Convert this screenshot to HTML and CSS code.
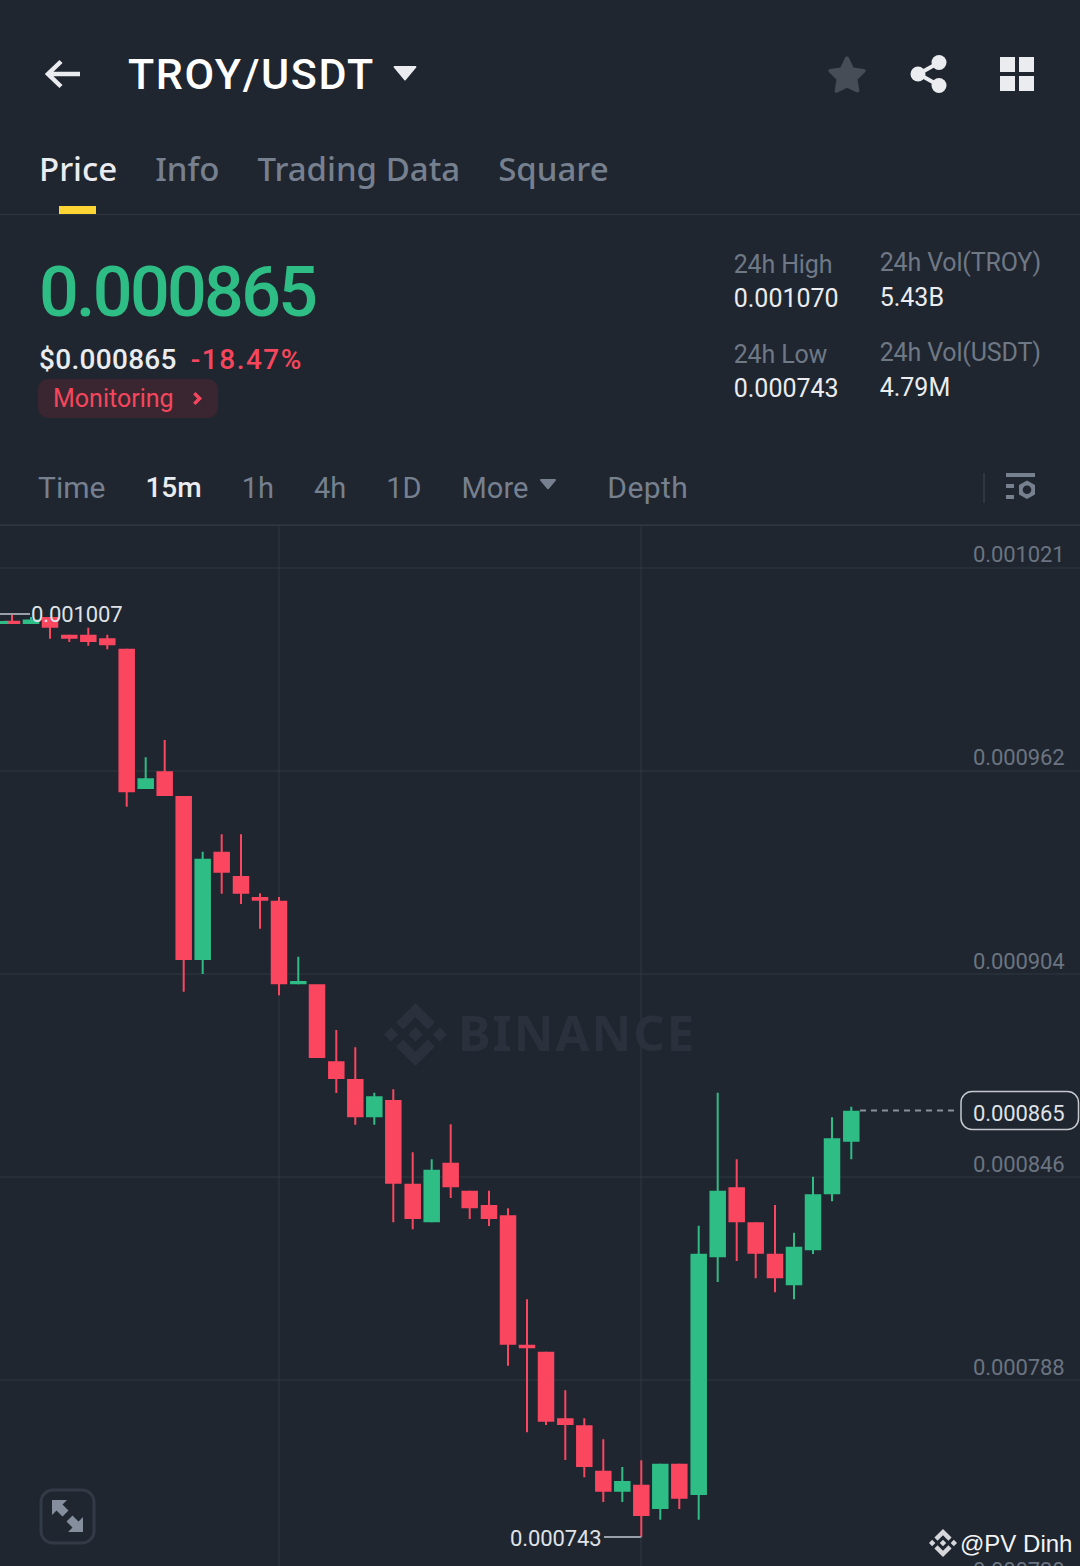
FILE: index.html
```html
<!DOCTYPE html>
<html lang="en">
<head>
<meta charset="utf-8">
<title>TROY/USDT</title>
<link rel="stylesheet" href="styles.css">
</head>
<body>
<svg class="defs" width="0" height="0" aria-hidden="true">
  <symbol id="bnb" viewBox="0 0 126.61 126.61">
    <path d="M38.73 53.2 63.3 28.63l24.6 24.6 14.3-14.3L63.3 0 24.43 38.9zM0 63.31 14.3 49l14.3 14.31-14.3 14.3zM38.73 73.41 63.31 97.98 87.9 73.4l14.31 14.3-38.9 38.91-38.88-38.88zM97.98 63.31 112.28 49l14.33 14.31-14.31 14.3zM77.83 63.3 63.3 48.78 48.78 63.3l14.52 14.52z"/>
  </symbol>
</svg>
<main class="page">
  <header class="topbar">
    <svg class="icon-back" viewBox="0 0 36 30"><path d="M35 15H4M16 2.5 3 15l13 12.5"/></svg>
    <h1 class="pair">TROY/USDT</h1>
    <svg class="icon-caret" viewBox="0 0 24 16"><path d="M1.5 1h21a1 1 0 0 1 .7 1.6L12.8 15a1 1 0 0 1-1.6 0L.8 2.6A1 1 0 0 1 1.5 1z"/></svg>
    <div class="top-actions">
      <svg class="icon-star" viewBox="0 0 38 38"><path d="M19 1.500c.9 0 1.500.5 1.900 1.300l4.700 9.700 10.300 1.500c1.800.3 2.300 2 1.100 3.200l-7.500 7.400 1.800 10.500c.3 1.700-1.300 2.900-2.900 2.100L19 32.800 9.600 37.600c-1.600.8-3.200-.4-2.900-2.100l1.800-10.900L1 17.200C-.2 16 .3 14.300 2.100 14l10.300-1.500 4.700-9.700c.4-.8 1-1.300 1.900-1.300z"/></svg>
      <svg class="icon-share" viewBox="0 0 38 38"><path class="share-line" d="M29 7.500 8.500 19 29 30.500"/><circle cx="29" cy="7.500" r="7.500"/><circle cx="8" cy="19" r="7.500"/><circle cx="29" cy="30.500" r="7.500"/></svg>
      <div class="icon-grid"><i></i><i></i><i></i><i></i></div>
    </div>
  </header>

  <nav class="tabs">
    <a class="tab tab-active">Price</a>
    <a class="tab">Info</a>
    <a class="tab">Trading Data</a>
    <a class="tab">Square</a>
  </nav>

  <section class="summary">
    <div class="quote">
      <div class="last">0.000865</div>
      <div class="sub"><span class="fiat">$0.000865</span><span class="change">-18.47%</span></div>
      <div class="pill">Monitoring<svg class="pill-chev" viewBox="0 0 10 14"><path d="M2 2l5 5-5 5"/></svg></div>
    </div>
    <div class="stats">
      <div class="stat-col">
        <div class="stat"><span class="stat-label">24h High</span><span class="stat-value">0.001070</span></div>
        <div class="stat"><span class="stat-label">24h Low</span><span class="stat-value">0.000743</span></div>
      </div>
      <div class="stat-col stat-col-right">
        <div class="stat"><span class="stat-label">24h Vol(TROY)</span><span class="stat-value">5.43B</span></div>
        <div class="stat"><span class="stat-label">24h Vol(USDT)</span><span class="stat-value">4.79M</span></div>
      </div>
    </div>
  </section>

  <div class="ranges">
    <span class="range range-time">Time</span>
    <span class="range range-on">15m</span>
    <span class="range range-std">1h</span>
    <span class="range range-std">4h</span>
    <span class="range range-std">1D</span>
    <span class="range range-std range-more">More<svg class="more-caret" viewBox="0 0 16 11"><path d="M1 0h14a1 1 0 0 1 .7 1.700L8.700 10a1 1 0 0 1-1.400 0L.3 1.700A1 1 0 0 1 1 0z"/></svg></span>
    <span class="range range-depth">Depth</span>
    <div class="range-tools">
      <span class="divider"></span>
      <svg class="icon-settings" viewBox="0 0 30 30"><path d="M1 0h29v4H1zM1 11h8v4H1zM1 22h8v4H1z"/><path fill-rule="evenodd" d="M22 7.500l8 4.600v9.300l-8 4.600-8-4.600v-9.300zM22 12.500a4.300 4.300 0 1 0 0 8.600 4.300 4.300 0 0 0 0-8.600z"/></svg>
    </div>
  </div>

  <section class="chart">
    <svg class="plot" viewBox="0 525 1080 1041" width="1080" height="1041">
      <path class="grid" d="M0 525.500H1080M0 568H1080M0 771H1080M0 974H1080M0 1177H1080M0 1380H1080M279 525V1566M641 525V1566"/>

      <use href="#bnb" class="mark" x="384" y="1003" width="63" height="63"/>
      <text class="mark-text" x="458" y="1051">BINANCE</text>

      <path class="wick dn" d="M12 614V624M50 617V638.700M69.300 634.700V642M88.300 627.700V645.700M107.300 634.700V649.300M126.700 648.700V806.700M164.700 740V796M183.700 796V991.700M221.700 834.300V893.700M241 834.300V904M260 893.300V928.700M279 897V995.300M336.300 1030V1093M355.300 1047.300V1124.700M393.300 1089.300V1222.300M412.700 1152.300V1229.300M450.700 1124.300V1198M469.700 1190.700V1219M489 1190.700V1226M508 1208.300V1365.700M527 1299.300V1432.300M546 1351.700V1425M565.300 1390.300V1460M584.300 1418.300V1477.300M603.300 1439.300V1502M641.300 1460.300V1537.300M679.300 1463.700V1509M736.700 1159.300V1261M755.700 1222.300V1278.300M775 1205V1292.300"/>
      <path class="body dn" d="M12 620.700V624M50 617V627.700M69.300 634.700V638.700M88.300 634.700V642M107.300 638.300V645.300M126.700 648.700V792.300M164.700 771.300V796M183.700 796V960M221.700 851.700V872.700M241 876V893.700M260 897V900.700M279 900.700V984.300M317 984.300V1058M336.300 1061.300V1079M355.300 1079V1117.300M393.300 1100V1183.700M412.700 1183.700V1219M450.700 1162.700V1187.300M469.700 1190.700V1208.300M489 1205V1219M508 1215.300V1344.700M527 1344.700V1348.300M546 1351.700V1421.700M565.300 1418.300V1425M584.300 1425.300V1467M603.300 1470.700V1491.700M641.300 1484.700V1516M679.300 1463.700V1498.700M736.700 1187.300V1222.300M755.700 1222.300V1253.700M775 1253.700V1278.300"/>
      <path class="wick up" d="M31 617V624M145.700 757.300V789M202.700 851.700V974M298.300 956.700V984.300M374.300 1092.700V1124.700M431.700 1159.300V1222.300M622.300 1467V1502M660.300 1463.700V1519.700M698.700 1225.700V1519.700M717.700 1092.700V1282M794 1232.700V1299.300M813 1176.700V1254M832 1117.300V1201.300M851.300 1106.700V1159.300"/>
      <path class="body up" d="M0 621V624M31 619.500V624M145.700 778.300V789M202.700 858.700V960M298.300 981V984.300M374.300 1096.300V1117.300M431.700 1169.700V1222.300M622.300 1481V1491.700M660.300 1463.700V1509M698.700 1253.700V1495M717.700 1190.700V1257.300M794 1246.700V1285.300M813 1194.300V1250.300M832 1138.300V1194.300M851.300 1110.700V1141.700"/>

      <path class="leader" d="M0 614H30M604 1537H641"/>
      <path class="last-line" d="M860 1110.500H956"/>
      <text class="tag" x="31" y="622">0.001007</text>
      <text class="tag" x="510" y="1546">0.000743</text>

      <text class="axis" x="973" y="562">0.001021</text>
      <text class="axis" x="973" y="765">0.000962</text>
      <text class="axis" x="973" y="969">0.000904</text>
      <text class="axis" x="973" y="1172">0.000846</text>
      <text class="axis" x="973" y="1375">0.000788</text>
      <text class="axis" x="973" y="1578">0.000730</text>

      <rect class="last-box" x="961" y="1091.500" width="117.500" height="38" rx="11"/>
      <text class="tag" x="973" y="1121">0.000865</text>

      <rect class="expand" x="41" y="1490" width="53" height="53" rx="12"/>
      <path class="expand-arrow" d="M52 1500h15l-4.500 4.500 6 6-6 6-6-6-4.500 4.500zM83 1532H68l4.500-4.500-6-6 6-6 6 6 4.500-4.500z"/>

      <use href="#bnb" class="credit-mark" x="929" y="1529" width="28" height="28"/>
      <text class="credit" x="960" y="1552">@PV Dinh</text>
    </svg>
  </section>
</main>
</body>
</html>
```

FILE: styles.css
```css
* { box-sizing: border-box; }
html, body { margin: 0; padding: 0; background: #1f2630; }
.defs { position: absolute; }
.page {
  width: 1080px;
  height: 1566px;
  overflow: hidden;
  background: #1f2630;
  color: #eaecef;
  font-family: Roboto, "Noto Sans", sans-serif;
}

/* top bar */
.topbar {
  height: 132px;
  padding: 16px 46px 0 45px;
  display: flex;
  align-items: center;
}
.icon-back { width: 36px; height: 30px; fill: none; stroke: #eaecef; stroke-width: 4.5; }
.pair {
  margin: 0 0 0 47px;
  font-size: 43px;
  font-weight: 500;
  line-height: 50px;
  color: #fff;
  letter-spacing: 1.6px;
}
.icon-caret { width: 24px; height: 16px; margin: -2px 0 0 18px; fill: #eaecef; }
.top-actions { margin-left: auto; display: flex; align-items: center; }
.icon-star { width: 38px; height: 38px; fill: #474d57; }
.icon-share { width: 38px; height: 38px; margin-left: 44px; fill: #eaecef; }
.share-line { fill: none; stroke: #eaecef; stroke-width: 4; }
.icon-grid {
  width: 34px;
  height: 34px;
  margin-left: 52px;
  display: grid;
  grid-template-columns: 1fr 1fr;
  gap: 4px;
}
.icon-grid i { background: #eaecef; display: block; }

/* tabs */
.tabs {
  height: 83px;
  padding: 0 0 0 39px;
  display: flex;
  gap: 38px;
  border-bottom: 1px solid #2f3641;
  font-family: "Noto Sans", Roboto, sans-serif;
}
.tab {
  position: relative;
  font-size: 33px;
  font-weight: 500;
  line-height: 73px;
  color: #76808f;
}
.tab-active { color: #eaecef; }
.tab-active::after {
  content: "";
  position: absolute;
  left: 20px;
  width: 37px;
  bottom: 0;
  height: 8px;
  background: #fcd535;
}

/* summary */
.summary {
  height: 225px;
  padding: 0 39px 0 39px;
  display: flex;
  justify-content: space-between;
}
.last {
  margin-top: 39px;
  font-size: 70px;
  line-height: 76px;
  font-weight: 500;
  letter-spacing: -2.7px;
  color: #2ebd85;
}
.sub { margin-top: 13px; display: flex; gap: 14px; font-size: 28px; line-height: 34px; font-weight: 500; }
.fiat { color: #eaecef; letter-spacing: 0.3px; }
.change { color: #f6465d; letter-spacing: 1.5px; }
.pill {
  margin-top: 2px;
  width: 180px;
  height: 39px;
  padding-left: 15px;
  display: flex;
  align-items: center;
  font-size: 25px;
  color: #f6465d;
  background: #3a2630;
  border-radius: 10px;
  margin-left: -1px;
}
.pill-chev { width: 11px; height: 15px; margin-left: 18px; fill: none; stroke: #f6465d; stroke-width: 3.2; }

.stats { display: flex; gap: 41px; padding-top: 35px; }
.stat-col { display: flex; flex-direction: column; gap: 26px; }
.stat-col-right { margin-top: -2px; gap: 25px; }
.stat { display: flex; flex-direction: column; gap: 4px; }
.stat-col-right .stat { gap: 5px; }
.stat-label { font-size: 25px; line-height: 30px; color: #6f7885; white-space: nowrap; letter-spacing: -0.15px; }
.stat-value { font-size: 25px; line-height: 30px; color: #eaecef; }

/* ranges */
.ranges {
  height: 85px;
  padding: 11px 0 0 38px;
  display: flex;
  align-items: center;
  font-size: 30px;
  color: #76808f;
  border-bottom: 1px solid #2b323c;
}
.range { white-space: nowrap; }
.range-on { margin-left: 40px; color: #eaecef; font-weight: 500; font-size: 28px; }
.range-std { margin-left: 40px; font-size: 29px; }
.range-more { display: flex; align-items: center; }
.more-caret { width: 16px; height: 11px; margin: -6px 0 0 12px; fill: #76808f; }
.range-depth { margin-left: 51px; letter-spacing: 0.4px; }
.range-tools { margin-left: auto; padding-right: 45px; display: flex; align-items: center; }
.divider { width: 2px; height: 30px; background: #2f3641; margin-right: 20px; }
.icon-settings { width: 30px; height: 30px; fill: #76808f; }

/* chart */
.chart { height: 1041px; }
.plot { display: block; }
.grid { fill: none; stroke: #2f3641; stroke-width: 1; }
.wick, .body { fill: none; }
.wick { stroke-width: 2; }
.body { stroke-width: 16.5; }
.up { stroke: #2ebd85; }
.dn { stroke: #fb4660; }
.mark { fill: #2a313c; }
.mark-text {
  fill: #2a313c;
  font-family: "Noto Sans", Roboto, sans-serif;
  font-size: 49px;
  font-weight: 700;
  letter-spacing: 2px;
}
.leader { fill: none; stroke: #9a9ea6; stroke-width: 2; }
.last-line { fill: none; stroke: #8a909a; stroke-width: 2; stroke-dasharray: 6 5; }
.tag { font-size: 22px; fill: #dfe2e7; letter-spacing: -0.1px; }
.axis { font-size: 22px; fill: #6b7480; letter-spacing: -0.1px; }
.last-box { fill: #1f2630; stroke: #c5c8cd; stroke-width: 1.5; }
.expand { fill: none; stroke: #333a46; stroke-width: 3; }
.expand-arrow { fill: #848e9c; }
.credit-mark { fill: #d5d7da; }
.credit { font-family: "Liberation Sans", Arial, sans-serif; font-size: 24px; fill: #f2f3f5; }
```
